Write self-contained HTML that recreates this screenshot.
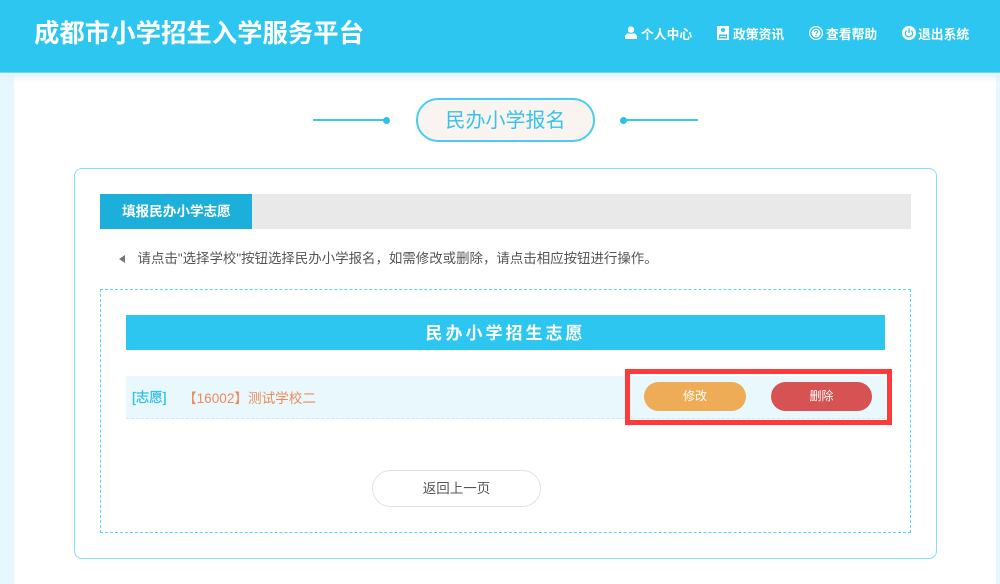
<!DOCTYPE html>
<html lang="zh-CN">
<head>
<meta charset="utf-8">
<title>成都市小学招生入学服务平台</title>
<style>
html,body{margin:0;padding:0;width:1000px;height:584px;overflow:hidden;background:#e6f8fd;font-family:"Liberation Sans","Noto Sans CJK SC",sans-serif}
.a{position:absolute;box-sizing:border-box;white-space:nowrap}
#page{position:relative;width:1000px;height:584px;overflow:hidden;filter:blur(.35px)}
.nav{top:24.5px;height:20px;line-height:20px;font-size:12.8px;font-weight:700;color:#fff}
.ic{position:absolute}
</style>
</head>
<body>
<div id="page">
  <div class="a" style="left:14px;top:0;width:982px;height:584px;background:#fff"></div>
  <div class="a" style="left:0;top:73px;width:1000px;height:10px;background:linear-gradient(#e2f3f8,rgba(255,255,255,0))"></div>
  <div class="a" style="left:0;top:0;width:1000px;height:73px;background:#2cc6f0;border-bottom:1px solid #6ad8f5"></div>

  <div class="a" style="left:34px;top:16px;height:36px;line-height:36px;font-size:25.4px;font-weight:700;color:#fff">成都市小学招生入学服务平台</div>

  <svg class="ic" style="left:625px;top:26px" width="12" height="14" viewBox="0 0 12 14"><circle cx="6" cy="3.6" r="3.2" fill="#fff"/><path d="M0 13V10.5C0 8.6 2 7.5 3.5 7.2C4.5 7.9 7.5 7.9 8.5 7.2C10 7.5 12 8.6 12 10.5V13Z" fill="#fff"/></svg>
  <div class="a nav" style="left:641px">个人中心</div>

  <svg class="ic" style="left:717px;top:26px" width="12" height="14" viewBox="0 0 12 14"><path fill-rule="evenodd" d="M0 0H12V14H0ZM2 8.5V12.5H10V8.5ZM6 2A2 2 0 1 0 6 6A2 2 0 1 0 6 2Z" fill="#fff"/><rect x="3" y="10" width="6" height="1" fill="#fff"/></svg>
  <div class="a nav" style="left:733px">政策资讯</div>

  <svg class="ic" style="left:809px;top:26px" width="14" height="14" viewBox="0 0 14 14"><circle cx="7" cy="7" r="6.4" fill="none" stroke="#fff" stroke-width="1.2"/><circle cx="7" cy="7" r="4.4" fill="#fff"/><path d="M5.4 5.8C5.5 4 8.6 4 8.6 5.8C8.6 6.9 7 7 7 8.2" fill="none" stroke="#2cc6f0" stroke-width="1.1"/><rect x="6.4" y="9" width="1.2" height="1.2" fill="#2cc6f0"/></svg>
  <div class="a nav" style="left:826px">查看帮助</div>

  <svg class="ic" style="left:902px;top:26px" width="14" height="14" viewBox="0 0 14 14"><circle cx="7" cy="7" r="7" fill="#fff"/><path d="M4.6 4.6A3.6 3.6 0 1 0 9.4 4.6" fill="none" stroke="#2cc6f0" stroke-width="1.3"/><rect x="6.3" y="2.6" width="1.4" height="4.4" fill="#2cc6f0"/></svg>
  <div class="a nav" style="left:918px">退出系统</div>

  <div class="a" style="left:313px;top:119px;width:74px;height:2px;background:#3cc8ee"></div>
  <div class="a" style="left:383px;top:117px;width:7px;height:7px;border-radius:50%;background:#2cc0ea"></div>
  <div class="a" style="left:621px;top:119px;width:77px;height:2px;background:#3cc8ee"></div>
  <div class="a" style="left:620px;top:117px;width:7px;height:7px;border-radius:50%;background:#2cc0ea"></div>

  <div class="a" style="left:416px;top:98px;width:179px;height:44px;border:2px solid #4ccbf0;border-radius:22px;background:#f9f4ef;text-align:center;line-height:42px;font-size:20px;color:#38c2ea">民办小学报名</div>

  <div class="a" style="left:74px;top:168px;width:863px;height:391px;border:1.5px solid #7fe0f7;border-radius:8px;background:#fff"></div>

  <div class="a" style="left:100px;top:194px;width:811px;height:35px;background:#e9e9e9"></div>
  <div class="a" style="left:100px;top:194px;width:152px;height:35px;background:#1cafd9;color:#fff;font-size:13.6px;font-weight:700;line-height:35px;padding-left:22px">填报民办小学志愿</div>

  <div class="a" style="left:119px;top:254.5px;width:0;height:0;border-top:4px solid transparent;border-bottom:4px solid transparent;border-right:6px solid #777"></div>
  <div class="a" style="left:137.5px;top:249px;height:20px;line-height:20px;font-size:13.45px;color:#555">请点击"选择学校"按钮选择民办小学报名，如需修改或删除，请点击相应按钮进行操作。</div>

  <div class="a" style="left:100px;top:289px;width:811px;height:244px;border:1px dashed #4fd8f8"></div>

  <div class="a" style="left:126px;top:315px;width:759px;height:35px;background:#2cc6f0;color:#fff;text-align:center;line-height:37px;font-size:17px;font-weight:700;letter-spacing:3px">民办小学招生志愿</div>

  <div class="a" style="left:126px;top:376px;width:759px;height:43px;background:#e8f8fd;border-bottom:1px dashed #c4eefa"></div>
  <div class="a" style="left:132px;top:388px;height:20px;line-height:20px;font-size:13.5px;color:#2cbde8;-webkit-text-stroke:.2px #2cbde8">[志愿]</div>
  <div class="a" style="left:183px;top:388.5px;height:20px;line-height:20px;font-size:13.6px;color:#ee8a5c">【16002】测试学校二</div>

  <div class="a" style="left:625px;top:369px;width:267px;height:56px;border:5.5px solid #ff3a3a"></div>
  <div class="a" style="left:644px;top:382px;width:102px;height:29px;border-radius:15px;background:#efac57;color:#fff;text-align:center;line-height:29px;font-size:12px">修改</div>
  <div class="a" style="left:771px;top:382px;width:101px;height:29px;border-radius:15px;background:#d75252;color:#fff;text-align:center;line-height:29px;font-size:12px">删除</div>

  <div class="a" style="left:372px;top:470px;width:169px;height:37px;border:1.5px solid #e2e2e2;border-radius:19px;background:#fff;text-align:center;line-height:36px;font-size:13.5px;color:#555">返回上一页</div>
</div>
</body>
</html>
